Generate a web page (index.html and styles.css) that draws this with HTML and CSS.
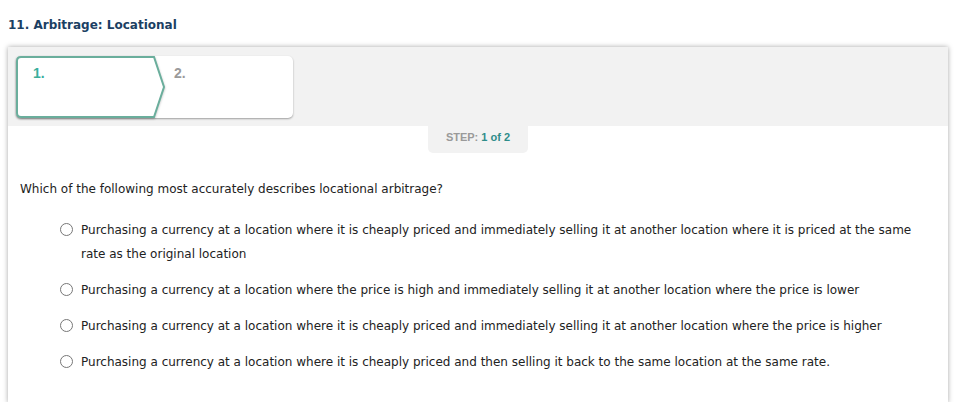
FILE: index.html
```html
<!DOCTYPE html>
<html>
<head>
<meta charset="utf-8">
<link rel="stylesheet" href="styles.css">
</head>
<body>
<div class="page">
  <h1 class="title">11. Arbitrage: Locational</h1>
  <div class="card">
    <div class="header">
      <div class="tabs">
        <div class="tab tab-active">
          <svg class="tab-shape" width="152" height="62" viewBox="0 0 152 62">
            <path d="M5 1 H138 L148 31 L138 61 H5 Q1 61 1 57 V5 Q1 1 5 1 Z" fill="#fff" stroke="#6aae9c" stroke-width="2"/>
          </svg>
          <span class="tab-num">1.</span>
        </div>
        <div class="tab tab-next">
          <span class="tab-num">2.</span>
        </div>
      </div>
    </div>
    <div class="step"><span class="step-label">STEP:</span> <span class="step-val">1 of 2</span></div>
    <p class="question">Which of the following most accurately describes locational arbitrage?</p>
    <ul class="options">
      <li class="option"><span class="radio"></span><span class="opt-text">Purchasing a currency at a location where it is cheaply priced and immediately selling it at another location where it is priced at the same rate as the original location</span></li>
      <li class="option"><span class="radio"></span><span class="opt-text">Purchasing a currency at a location where the price is high and immediately selling it at another location where the price is lower</span></li>
      <li class="option"><span class="radio"></span><span class="opt-text">Purchasing a currency at a location where it is cheaply priced and immediately selling it at another location where the price is higher</span></li>
      <li class="option"><span class="radio"></span><span class="opt-text">Purchasing a currency at a location where it is cheaply priced and then selling it back to the same location at the same rate.</span></li>
    </ul>
  </div>
</div>
</body>
</html>
```
FILE: styles.css
```css
html, body {
  margin: 0;
  padding: 0;
  background: #fff;
}
.page {
  padding: 18px 10px 0 8px;
  font-family: "DejaVu Sans", Verdana, sans-serif;
}
.title {
  margin: 0;
  font-size: 12px;
  font-weight: bold;
  color: #1b3f63;
  line-height: 15px;
}
.card {
  margin-top: 14px;
  width: 940px;
  height: 356px;
  background: #fff;
  box-shadow: 0 0 5px rgba(0,0,0,0.35);
}
.header {
  background: #f2f2f2;
  padding: 9px 8px 8px 8px;
}
.tabs {
  display: flex;
  width: 277px;
  height: 62px;
  background: #fff;
  border-radius: 5px;
  box-shadow: 0 1px 2px rgba(0,0,0,0.35);
}
.tab {
  position: relative;
  height: 62px;
}
.tab-active {
  width: 150px;
}
.tab-shape {
  position: absolute;
  left: 0;
  top: 0;
  filter: drop-shadow(0 1px 1px rgba(0,0,0,0.25));
}
.tab-num {
  position: relative;
  display: block;
  font-family: "Liberation Sans", Arial, sans-serif;
  font-weight: bold;
  font-size: 14px;
  line-height: 16px;
  padding-top: 9px;
}
.tab-active .tab-num {
  color: #3aae9c;
  padding-left: 17px;
}
.tab-next .tab-num {
  color: #9a9a9a;
  padding-left: 8px;
}
.step {
  margin: 0 auto;
  width: 100px;
  height: 27px;
  background: #f2f2f2;
  border-radius: 0 0 5px 5px;
  text-align: center;
  font-family: "Liberation Sans", Arial, sans-serif;
  font-weight: bold;
  font-size: 11px;
  line-height: 22px;
}
.step-label { color: #9a9a9a; }
.step-val { color: #2e8d8a; }
.question {
  margin: 28px 0 0 12px;
  font-size: 12px;
  line-height: 16px;
  color: #222;
}
.options {
  list-style: none;
  margin: 21px 0 0 0;
  padding: 0 18px 0 52px;
}
.option {
  display: flex;
  align-items: flex-start;
  font-size: 12px;
  line-height: 24px;
  color: #222;
  margin-bottom: 12px;
}
.radio {
  flex: none;
  width: 11px;
  height: 11px;
  border: 1px solid #777;
  border-radius: 50%;
  margin: 5px 8px 0 0;
}
.opt-text {
  flex: 1;
}
```
